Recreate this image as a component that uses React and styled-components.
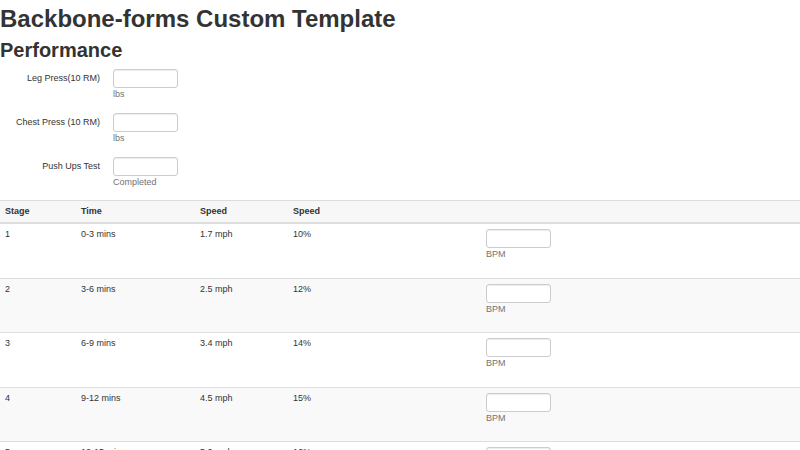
import React from "react";
import styled, { createGlobalStyle } from "styled-components";

const GlobalStyle = createGlobalStyle`
  body {
    margin: 0;
    background: #fff;
    color: #333;
    font-family: "Liberation Sans", Arial, sans-serif;
    font-size: 9px;
  }
`;

const fields = [
  { label: "Leg Press(10 RM)", help: "lbs" },
  { label: "Chest Press (10 RM)", help: "lbs" },
  { label: "Push Ups Test", help: "Completed" },
];

const stages = [
  ["1", "0-3 mins", "1.7 mph", "10%"],
  ["2", "3-6 mins", "2.5 mph", "12%"],
  ["3", "6-9 mins", "3.4 mph", "14%"],
  ["4", "9-12 mins", "4.5 mph", "15%"],
  ["5", "12-15 mins", "5.0 mph", "16%"],
];

const columns = [
  { title: "Stage", width: 76 },
  { title: "Time", width: 119 },
  { title: "Speed", width: 93 },
  { title: "Speed", width: 193 },
  { title: "", width: 319 },
];

export default function App() {
  return (
    <Page>
      <GlobalStyle />
      <Title>Backbone-forms Custom Template</Title>
      <Section>Performance</Section>
      <Form>
        {fields.map((f) => (
          <Group key={f.label}>
            <Label>{f.label}</Label>
            <Control>
              <Input type="text" />
              <Help>{f.help}</Help>
            </Control>
          </Group>
        ))}
      </Form>
      <Table>
        <colgroup>
          {columns.map((c, i) => (
            <col key={i} style={{ width: c.width }} />
          ))}
        </colgroup>
        <thead>
          <tr>
            {columns.map((c, i) => (
              <Th key={i}>{c.title}</Th>
            ))}
          </tr>
        </thead>
        <tbody>
          {stages.map((row, i) => (
            <Row key={row[0]} $striped={i % 2 === 1}>
              {row.map((cell, j) => (
                <Td key={j}>{cell}</Td>
              ))}
              <Td>
                <Input type="text" />
                <RowHelp>BPM</RowHelp>
              </Td>
            </Row>
          ))}
        </tbody>
      </Table>
    </Page>
  );
}

const Page = styled.div`
  width: 800px;
  overflow: hidden;
`;

const Title = styled.h1`
  margin: 6px 0 0;
  font-size: 24px;
  line-height: 26px;
  font-weight: bold;
`;

const Section = styled.h2`
  margin: 7px 0 0;
  font-size: 20px;
  line-height: 22px;
  font-weight: bold;
`;

const Form = styled.div`
  display: flex;
  flex-direction: column;
  gap: 13px;
  margin: 8px 0 12px;
`;

const Group = styled.div`
  display: flex;
  align-items: flex-start;
  gap: 13px;
`;

const Label = styled.label`
  width: 100px;
  text-align: right;
  line-height: 19px;
`;

const Control = styled.div`
  display: flex;
  flex-direction: column;
`;

const Input = styled.input`
  display: block;
  box-sizing: border-box;
  width: 65px;
  height: 19px;
  margin: 0;
  padding: 2px 4px;
  border: 1px solid #ccc;
  border-radius: 3px;
  box-shadow: inset 0 1px 1px rgba(0, 0, 0, 0.075);
  background: #fff;
  font: inherit;
`;

const Help = styled.span`
  color: #737373;
  line-height: 11px;
  margin-top: 1px;
`;

const Table = styled.table`
  width: 800px;
  table-layout: fixed;
  border-collapse: collapse;
`;

const Th = styled.th`
  text-align: left;
  font-weight: bold;
  padding: 5px;
  line-height: 11px;
  background: #f7f7f7;
  border-top: 1px solid #ddd;
  border-bottom: 2px solid #ddd;
`;

const Row = styled.tr`
  background: ${(p) => (p.$striped ? "#f9f9f9" : "#fff")};
`;

const Td = styled.td`
  vertical-align: top;
  padding: 5px;
  line-height: 11px;
  border-top: 1px solid #ddd;
`;

const RowHelp = styled.div`
  color: #737373;
  line-height: 11px;
  margin-top: 1px;
  margin-bottom: 12.5px;
`;
